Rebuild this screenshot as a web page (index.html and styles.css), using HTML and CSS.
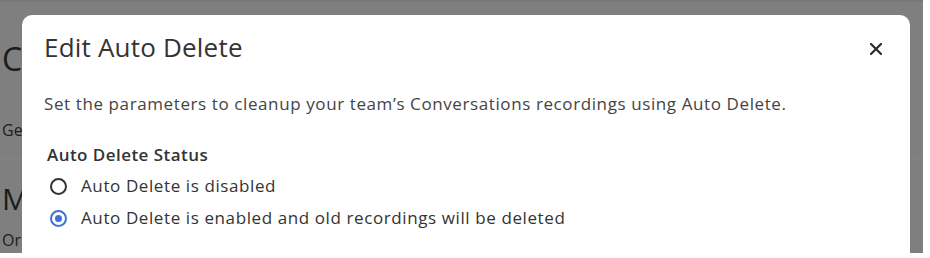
FILE: index.html
```html
<!DOCTYPE html>
<html lang="en">
<head>
    <meta charset="UTF-8">
    <title>Edit Auto Delete</title>
    <link rel="stylesheet" href="styles.css">
</head>
<body>
    <div class="screen">
        <!-- page behind the overlay -->
        <div class="page">
            <div class="page-title">C</div>
            <div class="page-tabs">Ge</div>
            <div class="page-section">M</div>
            <div class="page-text">Or</div>
        </div>

        <div class="modal">
            <div class="modal-header">
                <h2 class="modal-title">Edit Auto Delete</h2>
                <button class="close-btn" aria-label="Close">
                    <svg width="12" height="12" viewBox="0 0 12 12">
                        <path d="M1 1L11 11M11 1L1 11" stroke="#2b2b2b" stroke-width="2.2" stroke-linecap="square"/>
                    </svg>
                </button>
            </div>
            <p class="intro">Set the parameters to cleanup your team’s Conversations recordings using Auto Delete.</p>

            <div class="field">
                <div class="field-label">Auto Delete Status</div>
                <label class="radio">
                    <span class="radio-circle"></span>
                    <span>Auto Delete is disabled</span>
                </label>
                <label class="radio checked">
                    <span class="radio-circle"></span>
                    <span>Auto Delete is enabled and old recordings will be deleted</span>
                </label>
            </div>
        </div>
    </div>
</body>
</html>
```

FILE: styles.css
```css
body {
    margin: 0;
    background: #fff;
    font-family: "Open Sans", Arial, sans-serif;
}

.screen {
    position: relative;
    width: 923px;
    height: 253px;
    background: #7f7f7f;
    border-top: 2px solid #777;
    box-sizing: border-box;
    overflow: hidden;
}

.page {
    color: #1c1c1c;
    padding-left: 2px;
}

.page-title {
    font-size: 32px;
    line-height: 38px;
    margin-top: 38px;
}

.page-tabs {
    font-size: 16px;
    line-height: 20px;
    margin-top: 42px;
    padding-bottom: 18px;
    border-bottom: 1px solid #858585;
}

.page-section {
    font-size: 30px;
    line-height: 36px;
    margin-top: 22px;
}

.page-text {
    font-size: 16px;
    line-height: 20px;
    margin-top: 13px;
}

.modal {
    position: absolute;
    top: 13px;
    left: 22px;
    width: 888px;
    height: 300px;
    background: #fff;
    border-radius: 10px;
    padding: 0 22px;
    box-sizing: border-box;
    color: #3a3a3a;
}

.modal-header {
    display: flex;
    align-items: center;
    justify-content: space-between;
    padding-top: 15px;
}

.modal-title {
    margin: 0;
    font-size: 26px;
    font-weight: 400;
    line-height: 34px;
    letter-spacing: 0.2px;
    color: #333;
}

.close-btn {
    border: none;
    background: none;
    padding: 0;
    margin-right: 6px;
    margin-top: 4px;
    display: flex;
    cursor: pointer;
}

.intro {
    margin: 28px 0 0;
    font-size: 17px;
    line-height: 24px;
    letter-spacing: 0.6px;
    color: #444;
}

.field {
    margin-top: 27px;
}

.field-label {
    font-size: 17px;
    font-weight: 600;
    line-height: 24px;
    letter-spacing: 0.45px;
    color: #333;
    margin-left: 3px;
}

.radio {
    display: flex;
    align-items: center;
    gap: 14px;
    margin-top: 7px;
    margin-left: 6px;
    font-size: 17px;
    line-height: 24px;
    letter-spacing: 0.6px;
    color: #333;
}

.radio + .radio {
    margin-top: 8px;
}

.radio-circle {
    width: 17px;
    height: 17px;
    border: 2px solid #333;
    border-radius: 50%;
    box-sizing: border-box;
    display: flex;
    align-items: center;
    justify-content: center;
}

.radio.checked .radio-circle {
    border-color: #3a72d8;
}

.radio.checked .radio-circle::after {
    content: "";
    width: 7px;
    height: 7px;
    border-radius: 50%;
    background: #3a72d8;
}
```
